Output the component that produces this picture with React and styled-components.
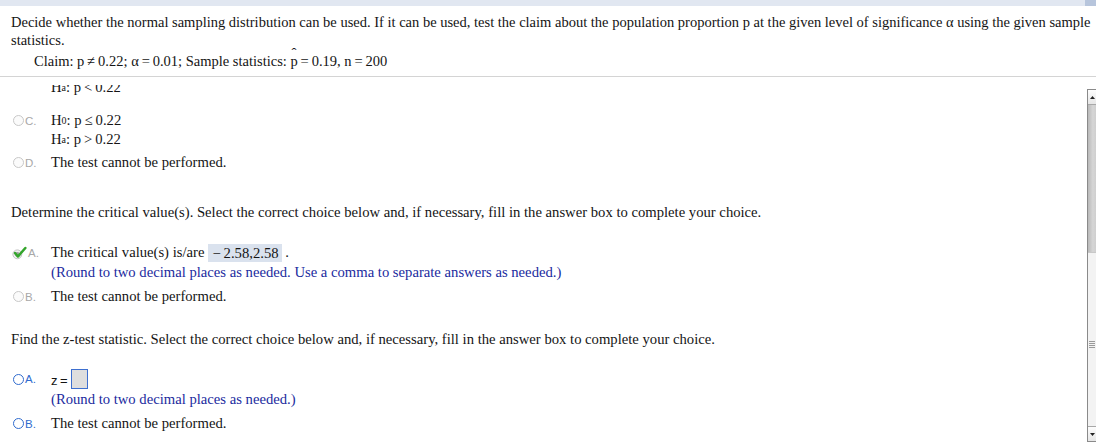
import React from "react";
import styled, { createGlobalStyle, css } from "styled-components";

const GlobalStyle = createGlobalStyle`
  html, body { margin: 0; padding: 0; background: #fff; }
  body {
    font-family: "Liberation Serif", "Times New Roman", serif;
    font-size: 14.67px;
    color: #141414;
    overflow: hidden;
  }
`;

const Page = styled.div`
  width: 1096px;
  height: 447px;
  display: flex;
  flex-direction: column;
  overflow: hidden;
`;

const TopBar = styled.div`
  height: 6px;
  flex: none;
  background: #e1e7f1;
  display: flex;
  justify-content: flex-end;
`;

const TopCorner = styled.div`
  width: 11px;
  background: #b7c5dc;
`;

const Question = styled.div`
  padding: 7px 0 0 11px;
  flex: none;
`;

const Prompt = styled.div`
  line-height: 18px;
  font-size: 14.5px;
  white-space: nowrap;
`;

const Claim = styled.div`
  margin-top: 3px;
  padding-left: 23px;
  line-height: 18px;
  font-size: 14.5px;
`;

const Divider = styled.div`
  flex: none;
  margin-top: 6px;
  border-top: 1px solid #d4d4d4;
`;

const Pane = styled.div`
  flex: 1;
  display: flex;
  min-height: 0;
`;

const Viewport = styled.div`
  flex: 1;
  margin-top: 8px;
  overflow: hidden;
`;

const Scroller = styled.div`
  margin-top: ${(p) => p.$offset}px;
`;

const ScrollBar = styled.div`
  flex: none;
  width: 8px;
  margin-top: 12px;
  height: 351px;
  border: 1px solid #8a8a8a;
  border-right: none;
  display: flex;
  flex-direction: column;
  background: #f3f3f3;
`;

const ArrowBtn = styled.div`
  height: 14px;
  flex: none;
  background: linear-gradient(#fdfdfd, #e6e6e6);
  border-${(p) => (p.$down ? "top" : "bottom")}: 1px solid #a8a8a8;
  display: flex;
  align-items: center;
  justify-content: center;
`;

const Thumb = styled.div`
  height: 147px;
  flex: none;
  background: linear-gradient(90deg, #b9b9b9, #d6d6d6 60%, #cfcfcf);
  border-bottom: 1px solid #c8c8c8;
`;

const Track = styled.div`
  flex: 1;
  display: flex;
  flex-direction: column;
  justify-content: center;
  align-items: center;
`;

const Grip = styled.div`
  width: 6px;
  height: 7px;
  background: repeating-linear-gradient(#9a9a9a 0 1px, transparent 1px 2px);
  margin-top: 10px;
`;

const Section = styled.div`
  padding-left: 11px;
  line-height: 19px;
  white-space: nowrap;
  margin: ${(p) => p.$top}px 0 ${(p) => p.$bottom}px;
`;

const Option = styled.div`
  display: grid;
  grid-template-columns: 38px 1fr;
  padding-left: 13px;
  margin-bottom: ${(p) => p.$gap ?? 4}px;
`;

const Marker = styled.div`
  display: flex;
  align-items: center;
  height: ${(p) => p.$h ?? 19}px;
  gap: 1px;
`;

const Circle = styled.span`
  width: 11px;
  height: 11px;
  border-radius: 50%;
  box-sizing: border-box;
  flex: none;
  ${(p) =>
    p.$active
      ? css`
          border: 1.5px solid #2f6bce;
          background: #fff;
        `
      : css`
          border: 1px solid #c8c8c8;
          background: #fbfbfb;
        `}
`;

const Letter = styled.span`
  font-family: "Liberation Sans", Arial, sans-serif;
  font-size: 11.5px;
  color: ${(p) => (p.$active ? "#2f6bce" : "#a8a8a8")};
`;

const CheckWrap = styled.span`
  width: 16px;
  height: 16px;
  flex: none;
  margin-left: -1px;
  margin-right: -1px;
  display: inline-flex;
`;

const Body = styled.div`
  line-height: 19px;
`;

const Line = styled.div`
  height: ${(p) => p.$h ?? 19}px;
  display: flex;
  align-items: center;
  white-space: nowrap;
  color: ${(p) => (p.$hint ? "#1a2a9e" : "#141414")};
`;

const Sub = styled.sub`
  font-size: 10px;
  vertical-align: -4px;
  line-height: 0;
`;

const HatP = styled.span`
  position: relative;
  display: inline-block;
`;

const Hat = styled.span`
  position: absolute;
  left: 1px;
  top: -6px;
  font-size: 15px;
  line-height: 1;
`;

const Answer = styled.span`
  background: #dae2ee;
  padding: 0 3px 0 4px;
  margin-left: 4px;
  line-height: 18px;
  display: inline-block;
`;

const Sans = styled.span`
  font-family: "Liberation Sans", Arial, sans-serif;
  font-size: 13px;
  margin-right: 2px;
  padding-top: 3px;
`;

const InputBox = styled.span`
  display: inline-block;
  width: 15px;
  height: 18px;
  background: #dedede;
  border: 1px solid #3d6fcf;
  margin-left: 1px;
`;

function Radio({ letter, active }) {
  return (
    <>
      <Circle $active={active} />
      <Letter $active={active}>{letter}</Letter>
    </>
  );
}

function CheckedRadio({ letter }) {
  return (
    <>
      <CheckWrap>
        <svg width="18" height="16" viewBox="0 0 18 16">
          <circle cx="6" cy="9.5" r="5" fill="#f0f0f0" stroke="#bdbdbd" strokeWidth="1" />
          <circle cx="6" cy="9.5" r="2.7" fill="#a0a0a0" />
          <path d="M3.4 8 L6.6 12 L15 2.4" fill="none" stroke="#33a52b" strokeWidth="2.8" strokeLinecap="round" strokeLinejoin="round" />
        </svg>
      </CheckWrap>
      <Letter>{letter}</Letter>
    </>
  );
}

const Hyp = ({ h, rel, v }) => (
  <Line>
    H<Sub>{h}</Sub>:&nbsp;p&thinsp;{rel}&thinsp;{v}
  </Line>
);

export default function App() {
  return (
    <>
      <GlobalStyle />
      <Page>
        <TopBar>
          <TopCorner />
        </TopBar>
        <Question>
          <Prompt>
            Decide whether the normal sampling distribution can be used. If it can be used, test the claim about the
            population proportion p at the given level of significance α using the given sample
            <br />
            statistics.
          </Prompt>
          <Claim>
            Claim: p&thinsp;≠&thinsp;0.22; α&thinsp;=&thinsp;0.01; Sample statistics:{" "}
            <HatP>
              p<Hat>ˆ</Hat>
            </HatP>
            &thinsp;=&thinsp;0.19, n&thinsp;=&thinsp;200
          </Claim>
        </Question>
        <Divider />
        <Pane>
          <Viewport>
            <Scroller $offset={-26}>
              <Option $gap={14}>
                <Marker>
                  <Radio letter="B." />
                </Marker>
                <Body>
                  <Hyp h="0" rel="≥" v="0.22" />
                  <Hyp h="a" rel="<" v="0.22" />
                </Body>
              </Option>
              <Option>
                <Marker>
                  <Radio letter="C." />
                </Marker>
                <Body>
                  <Hyp h="0" rel="≤" v="0.22" />
                  <Hyp h="a" rel=">" v="0.22" />
                </Body>
              </Option>
              <Option>
                <Marker>
                  <Radio letter="D." />
                </Marker>
                <Body>
                  <Line>The test cannot be performed.</Line>
                </Body>
              </Option>

              <Section $top={31} $bottom={20}>
                Determine the critical value(s). Select the correct choice below and, if necessary, fill in the answer
                box to complete your choice.
              </Section>

              <Option $gap={5}>
                <Marker $h={21}>
                  <CheckedRadio letter="A." />
                </Marker>
                <Body>
                  <Line $h={21}>
                    The critical value(s) is/are <Answer>−&thinsp;2.58,2.58</Answer>&nbsp;.
                  </Line>
                  <Line $hint>(Round to two decimal places as needed. Use a comma to separate answers as needed.)</Line>
                </Body>
              </Option>
              <Option>
                <Marker>
                  <Radio letter="B." />
                </Marker>
                <Body>
                  <Line>The test cannot be performed.</Line>
                </Body>
              </Option>

              <Section $top={24} $bottom={19}>
                Find the z-test statistic. Select the correct choice below and, if necessary, fill in the answer box to
                complete your choice.
              </Section>

              <Option $gap={5}>
                <Marker $h={22}>
                  <Radio letter="A." active />
                </Marker>
                <Body>
                  <Line $h={22}>
                    <Sans>z&thinsp;=</Sans>
                    <InputBox />
                  </Line>
                  <Line $hint>(Round to two decimal places as needed.)</Line>
                </Body>
              </Option>
              <Option>
                <Marker>
                  <Radio letter="B." active />
                </Marker>
                <Body>
                  <Line>The test cannot be performed.</Line>
                </Body>
              </Option>
            </Scroller>
          </Viewport>
          <ScrollBar>
            <ArrowBtn>
              <svg width="5" height="3" viewBox="0 0 5 3">
                <path d="M0 3 L2.5 0 L5 3 Z" fill="#222" />
              </svg>
            </ArrowBtn>
            <Thumb />
            <Track>
              <Grip />
            </Track>
            <ArrowBtn $down>
              <svg width="5" height="3" viewBox="0 0 5 3">
                <path d="M0 0 L2.5 3 L5 0 Z" fill="#222" />
              </svg>
            </ArrowBtn>
          </ScrollBar>
        </Pane>
      </Page>
    </>
  );
}
